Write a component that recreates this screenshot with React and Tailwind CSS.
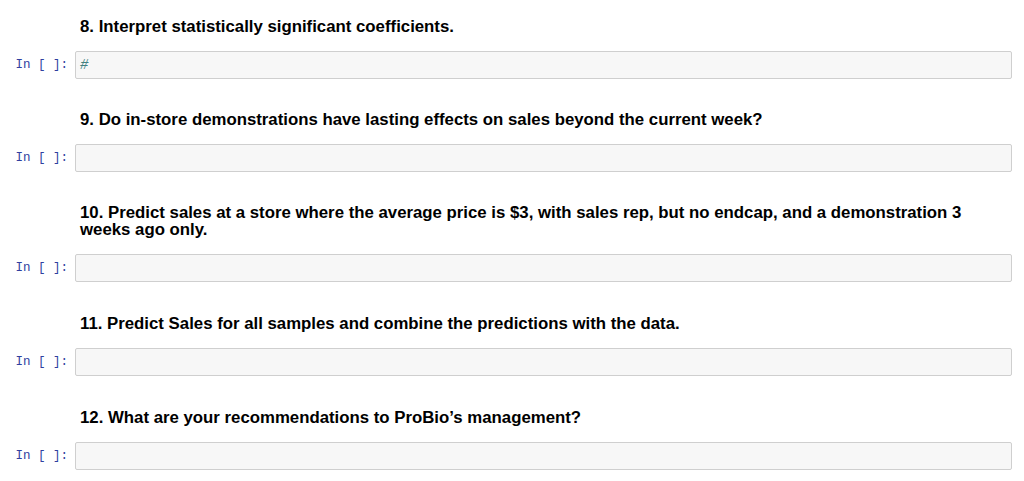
import React from "react";

function Heading({ children, pt }) {
  return (
    <div className={`${pt} pl-[80px] pr-[24px]`}>
      <h4 className="text-[16.8px] leading-[17px] font-bold text-black" style={{ fontFamily: '"Liberation Sans", Arial, sans-serif' }}>
        {children}
      </h4>
    </div>
  );
}

function CodeCell({ content }) {
  return (
    <div className="flex items-center pt-[16px] pr-[12px]">
      <div className="w-[75px] shrink-0 pr-[7px] text-right text-[12.5px] text-[#303F9F]" style={{ fontFamily: '"Liberation Mono", "DejaVu Sans Mono", monospace' }}>
        In&nbsp;[&nbsp;]:
      </div>
      <div className="flex-1 h-[28px] bg-[#f7f7f7] border border-[#cfcfcf] rounded-[2px] flex items-center px-[4px]">
        {content ? (
          <span className="italic text-[#408080] text-[14px]" style={{ fontFamily: '"Liberation Mono", monospace' }}>
            {content}
          </span>
        ) : null}
      </div>
    </div>
  );
}

export default function App() {
  return (
    <div className="w-[1024px] h-[481px] bg-white overflow-hidden">
      <Heading pt="pt-[18px]">8. Interpret statistically significant coefficients.</Heading>
      <CodeCell content="#" />
      <Heading pt="pt-[32px]">9. Do in-store demonstrations have lasting effects on sales beyond the current week?</Heading>
      <CodeCell />
      <Heading pt="pt-[32px]">
        10. Predict sales at a store where the average price is $3, with sales rep, but no endcap, and a demonstration 3 weeks ago only.
      </Heading>
      <CodeCell />
      <Heading pt="pt-[33px]">11. Predict Sales for all samples and combine the predictions with the data.</Heading>
      <CodeCell />
      <Heading pt="pt-[33px]">12. What are your recommendations to ProBio’s management?</Heading>
      <CodeCell />
    </div>
  );
}
